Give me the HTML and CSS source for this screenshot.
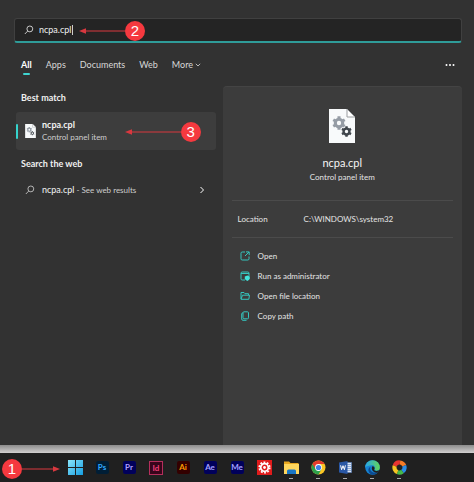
FILE: index.html
```
<!DOCTYPE html>
<html lang="en">
<head>
    <meta charset="utf-8">
    <title>Search</title>
    <link rel="stylesheet" href="styles.css">
</head>
<body>
    <!-- Shared shapes -->
    <svg class="defs" aria-hidden="true">
        <symbol id="search" viewBox="0 0 12 12">
            <circle cx="7" cy="4.7" r="3.5" fill="none" stroke="currentColor"/>
            <path d="M4.4 7.3 1 10.8" stroke="currentColor" fill="none"/>
        </symbol>
        <symbol id="gear" viewBox="-10 -10 20 20">
            <circle r="5.3" fill="none" stroke="currentColor" stroke-width="4.4"/>
            <path d="M0-6.5v-3M0 6.5v3M5.6-3.2l2.6-1.5M-5.6 3.2l-2.6 1.5M5.6 3.2l2.6 1.5M-5.6-3.2l-2.6-1.5" stroke="currentColor" stroke-width="4.4"/>
        </symbol>
        <symbol id="file" viewBox="0 0 26 34">
            <path d="M0 0h18l8 8v26H0z" fill="#f8fafb"/>
            <path d="M18 0v8h8z" fill="#fff" stroke="#9a9da0" stroke-width="1"/>
            <use href="#gear" x="3" y="7" width="14" height="14" color="#959ca5"/>
            <use href="#gear" x="12" y="17" width="11" height="11" color="#40464c"/>
        </symbol>
        <symbol id="arrow" viewBox="0 0 56 6" preserveAspectRatio="xMinYMid slice">
            <path d="M5 3h51" stroke="#d9383f" stroke-width="1"/>
            <path d="M0 3 7 .3v5.4z" fill="#d9383f"/>
        </symbol>
    </svg>

    <main class="panel">
        <div class="search-box">
            <svg class="icon"><use href="#search"/></svg>
            <input type="text" id="query" value="ncpa.cpl" aria-label="Search">
            <span class="caret"></span>
            <div class="callout callout-search"><svg><use href="#arrow"/></svg><span class="badge">2</span></div>
        </div>

        <nav class="tabs">
            <button class="tab active">All</button>
            <button class="tab">Apps</button>
            <button class="tab">Documents</button>
            <button class="tab">Web</button>
            <button class="tab">More
                <svg class="chevron" viewBox="0 0 6 6"><path d="M.8 1.8 3 4l2.2-2.2" fill="none" stroke="currentColor" stroke-width=".8"/></svg>
            </button>
            <button class="options" aria-label="Options">
                <svg viewBox="0 0 10 4"><circle cx="1.5" cy="2" r="1"/><circle cx="5" cy="2" r="1"/><circle cx="8.5" cy="2" r="1"/></svg>
            </button>
        </nav>

        <div class="content">
            <section class="results">
                <h2>Best match</h2>
                <button class="best">
                    <svg class="file-small"><use href="#file"/></svg>
                    <span class="best-text"><b>ncpa.cpl</b><span>Control panel item</span></span>
                    <span class="callout callout-best"><svg><use href="#arrow"/></svg><span class="badge">3</span></span>
                </button>
                <h2>Search the web</h2>
                <button class="web">
                    <svg class="icon"><use href="#search"/></svg>
                    <span class="web-text"><b>ncpa.cpl</b> - See web results</span>
                    <svg class="next" viewBox="0 0 6 8"><path d="M1.5 1 4.5 4l-3 3" fill="none" stroke="currentColor"/></svg>
                </button>
            </section>

            <section class="preview">
                <svg class="file-large"><use href="#file"/></svg>
                <h1>ncpa.cpl</h1>
                <p class="kind">Control panel item</p>
                <dl class="location">
                    <dt>Location</dt>
                    <dd>C:\WINDOWS\system32</dd>
                </dl>
                <div class="actions">
                    <button>
                        <svg viewBox="0 0 10 10"><path d="M5 1H2.2Q1 1 1 2.2v5.6Q1 9 2.2 9h5.6Q9 9 9 7.8V5.5M6 .9h3.2v3.2M9 1 5 5"/></svg>
                        Open
                    </button>
                    <button>
                        <svg viewBox="0 0 10 10"><path d="M5 9H2.2Q1 9 1 7.8V2.2Q1 1 2.2 1h5.6Q9 1 9 2.2V5M1 2.5h8"/><path class="solid" d="m7.3 4.500 2.500 1v1.800q0 1.800-2.500 2.700-2.500-.9-2.500-2.700V5.500z"/></svg>
                        Run as administrator
                    </button>
                    <button>
                        <svg viewBox="0 0 10 10"><path d="M1 8V1.500h3l1 1.200h3.500v1.500M1 8.300 2.500 4.200h7L8.800 8.300z"/></svg>
                        Open file location
                    </button>
                    <button>
                        <svg viewBox="0 0 10 10"><rect x="3" y=".8" width="5.500" height="7" rx="1"/><path d="M3 2H2.500Q1.700 2 1.700 3v5q0 1.300 1.300 1.300h3.500"/></svg>
                        Copy path
                    </button>
                </div>
            </section>
        </div>
    </main>

    <div class="desktop"></div>

    <footer class="taskbar">
        <div class="callout callout-start"><span class="badge">1</span><svg><use href="#arrow"/></svg></div>
        <button class="app" aria-label="Start">
            <svg class="windows" viewBox="0 0 15 15">
                <linearGradient id="win" x2="1" y2="1"><stop stop-color="#8ae6fb"/><stop offset="1" stop-color="#159de0"/></linearGradient>
                <path fill="url(#win)" d="M0 0h7v7H0zM8 0h7v7H8zM0 8h7v7H0zM8 8h7v7H8z"/>
            </svg>
        </button>
        <button class="app"><span class="tile ps">Ps</span></button>
        <button class="app"><span class="tile pr">Pr</span></button>
        <button class="app"><span class="tile id">Id</span></button>
        <button class="app"><span class="tile ai">Ai</span></button>
        <button class="app"><span class="tile ae">Ae</span></button>
        <button class="app"><span class="tile ae">Me</span></button>
        <button class="app" aria-label="Capture">
            <svg viewBox="0 0 15 15">
                <path fill="#e01b1b" d="M0 0h15v15H0z"/>
                <circle cx="7.5" cy="7.5" r="5.3" fill="none" stroke="#fff" stroke-width="1.6" stroke-dasharray="1.9 1.43"/>
                <circle cx="7.5" cy="7.5" r="3.8" fill="none" stroke="#fff" stroke-width="1.8"/>
                <circle cx="7.5" cy="7.5" r="1.4" fill="#fff"/>
            </svg>
        </button>
        <button class="app running" aria-label="File Explorer">
            <svg viewBox="0 0 15 15">
                <path fill="#e9a820" d="M0 1.500h5l1.500 1.500H14.500v4H0z"/>
                <path fill="#ffd75e" d="M0 4h15v10H0z"/>
                <path fill="#1976c5" d="M3 14v-3q0-1.500 1.500-1.500h6Q12 9.500 12 11v3z"/>
            </svg>
        </button>
        <button class="app running" aria-label="Chrome">
            <svg viewBox="0 0 15 15">
                <circle cx="7.5" cy="7.5" r="7" fill="#fbc624"/>
                <path fill="#2da14c" d="M1.440 4A7 7 0 0 0 7.500 14.500l3-5.200-3-1.800z"/>
                <path fill="#e33b2e" d="M7.500 4h6.060A7 7 0 0 0 1.440 4L4.500 9z"/>
                <circle cx="7.5" cy="7.5" r="3.4" fill="#fff"/>
                <circle cx="7.5" cy="7.5" r="2.6" fill="#3f7fe8"/>
            </svg>
        </button>
        <button class="app running" aria-label="Word">
            <svg viewBox="0 0 15 15">
                <path fill="#dfe8f5" stroke="#5580c0" stroke-width=".6" d="M8 2.500h5.500v10H8z"/>
                <path stroke="#6d91c8" stroke-width=".7" d="M9 4.500h4M9 6.500h4M9 8.500h4M9 10.500h4"/>
                <path fill="#2957a4" d="m1 2.500 8.500-1.500v13L1 12.500z"/>
                <path fill="none" stroke="#fff" d="m2.600 5.300 1 4.400 1.400-4 1.400 4 1-4.400"/>
            </svg>
        </button>
        <button class="app running" aria-label="Edge">
            <svg viewBox="0 0 15 15">
                <linearGradient id="edge" x2="1"><stop stop-color="#27a5e8"/><stop offset="1" stop-color="#63d657"/></linearGradient>
                <circle cx="7.5" cy="7.5" r="7.3" fill="#1683d3"/>
                <path fill="url(#edge)" d="M.2 7.500a7.300 7.300 0 0 1 14.600 0q0 3.200-3.300 3.200c-1.600 0-2.500-.6-2-1.400 1-2 0-4-2.500-4-3 0-5.500 1-6.800 2.200z"/>
                <path fill="#0b4b93" d="M5.500 6.700c-1.500 4 2 7.300 7.500 5.600-3 3.700-8.500 2.800-9.500-1.300-.5-2 .5-3.700 2-4.300z"/>
                <path fill="#202020" d="M7.400 6.300c1.800.2 2.700 1.500 2 3-.6 1 .4 1.600 2.200 1.600l3-.6-1.600 2.200c-4.400 1.100-7.600-3-5.600-6.200z"/>
            </svg>
        </button>
        <button class="app running" aria-label="Browser">
            <svg viewBox="0 0 15 15">
                <g fill="none" stroke-width="4.2">
                    <path stroke="#e73430" d="M2.700 6A5 5 0 0 1 8 2.500"/>
                    <path stroke="#f57a25" d="M8 2.500a5 5 0 0 1 4.200 3.300"/>
                    <path stroke="#2b8de6" d="M12.200 5.800a5 5 0 0 1-1.700 5.700"/>
                    <path stroke="#45b84a" d="M10.500 11.500a5 5 0 0 1-5 .6"/>
                    <path stroke="#f6c523" d="M5.500 12.100A5 5 0 0 1 2.700 6"/>
                </g>
            </svg>
        </button>
    </footer>
</body>
</html>
```
FILE: styles.css
```
* {
    box-sizing: border-box;
}

body {
    margin: 0;
    min-height: 100vh;
    display: flex;
    flex-direction: column;
    background: #202020;
    color: #e4e4e4;
    font-family: Lato, "Open Sans", sans-serif;
    font-size: 8px;
    line-height: 12px;
}

.defs {
    position: absolute;
    width: 0;
    height: 0;
}

button {
    display: flex;
    align-items: center;
    padding: 0;
    border: 0;
    background: none;
    color: inherit;
    font: inherit;
    text-align: left;
}

svg {
    display: block;
    flex: none;
}

.panel {
    flex: 1;
    display: flex;
    flex-direction: column;
    padding: 18px 12px 0 14px;
    background: #323232;
}

/* Search box */
.search-box {
    position: relative;
    display: flex;
    align-items: center;
    height: 25px;
    padding-left: 9px;
    border: 1px solid #404040;
    border-bottom: 2px solid #2f9c99;
    border-radius: 3px;
    background: #242424;
}

.icon {
    width: 10px;
    height: 10px;
}

.search-box input {
    width: 33px;
    margin-left: 5px;
    padding: 0;
    border: 0;
    outline: 0;
    background: none;
    color: #f0f0f0;
    font: inherit;
    font-size: 9px;
}

.caret {
    width: 1px;
    height: 10px;
    background: #ccc;
}

/* Numbered callouts */
.callout {
    position: absolute;
    display: flex;
    align-items: center;
}

.callout svg {
    width: 46px;
    height: 6px;
}

.badge {
    width: 20px;
    height: 20px;
    border-radius: 50%;
    background: #f5393f;
    color: #fff;
    font-family: "Liberation Sans", Arial, sans-serif;
    font-size: 15px;
    line-height: 20px;
    text-align: center;
}

.callout-search {
    left: 64px;
    top: 2px;
}

.callout-best {
    right: 15px;
    top: 10px;
}

.callout-best svg {
    width: 56px;
}

.callout-start {
    left: 2px;
    top: 6px;
}

.callout-start svg {
    width: 38px;
    transform: rotate(180deg);
}

/* Tabs */
.tabs {
    display: flex;
    gap: 14px;
    height: 43px;
    padding: 0 7px;
}

.tab {
    position: relative;
    color: #d8d8d8;
    font-size: 9px;
}

.tab.active {
    color: #fff;
    font-weight: 700;
}

.tab.active::after {
    content: "";
    position: absolute;
    left: 2px;
    bottom: 11px;
    width: 7px;
    height: 2px;
    border-radius: 1px;
    background: #3fd5d0;
}

.chevron {
    width: 6px;
    height: 6px;
    margin-left: 2px;
}

.options {
    margin-left: auto;
}

.options svg {
    width: 10px;
    height: 4px;
    fill: #fff;
}

/* Results */
.content {
    flex: 1;
    display: flex;
    gap: 7px;
}

.results {
    width: 45%;
    padding: 6px 0 0 2px;
}

h2 {
    margin: 0 5px;
    color: #f0f0f0;
    font-size: 9px;
    font-weight: 700;
    line-height: 12px;
}

.best {
    position: relative;
    width: 100%;
    height: 38px;
    margin: 8px 0;
    padding-left: 9px;
    border-radius: 3px;
    background: #3d3d3d;
}

.best::before {
    content: "";
    position: absolute;
    left: 0;
    top: 12px;
    width: 2px;
    height: 15px;
    border-radius: 1px;
    background: #35d3cc;
}

.file-small {
    width: 11px;
    height: 14px;
}

.best-text {
    display: flex;
    flex-direction: column;
    margin-left: 6px;
    color: #cdcdcd;
}

.best b,
.web b {
    color: #f4f4f4;
    font-size: 9px;
}

.web b {
    font-weight: 400;
}

.web {
    width: 100%;
    height: 40px;
    padding: 0 11px 0 9px;
    color: #cdcdcd;
}

.web-text {
    flex: 1;
    margin-left: 7px;
}

.next {
    width: 6px;
    height: 8px;
    color: #fff;
}

/* Preview */
.preview {
    flex: 1;
    padding: 22px 9px;
    border-radius: 4px 4px 0 0;
    border-top: 1px solid #444;
    background: #3c3c3c;
}

.file-large {
    width: 26px;
    height: 34px;
    margin: 0 auto;
}

h1 {
    margin: 12px 0 0;
    color: #f6f6f6;
    font-size: 11px;
    font-weight: 400;
    line-height: 16px;
    text-align: center;
}

.kind {
    margin: 0;
    text-align: center;
}

.location {
    display: flex;
    margin: 17px 0 8px;
    padding: 12px 6px;
    border-top: 1px solid #4b4b4b;
    border-bottom: 1px solid #4b4b4b;
}

.location dt {
    width: 66px;
}

.location dd {
    margin: 0;
}

.actions button {
    gap: 8px;
    width: 100%;
    height: 20px;
    padding-left: 8px;
}

.actions svg {
    width: 10px;
    height: 10px;
    fill: none;
    stroke: #35c5be;
    stroke-width: 1;
}

.actions .solid {
    fill: #43e5dd;
    stroke: none;
}

/* Desktop strip between panel and taskbar */
.desktop {
    height: 8px;
    background: linear-gradient(#8c8c8c, #d2d0d0);
}

/* Taskbar */
.taskbar {
    position: relative;
    display: flex;
    justify-content: center;
    height: 29px;
    background: #202020;
}

.app {
    position: relative;
    justify-content: center;
    width: 27px;
}

.app svg {
    width: 15px;
    height: 15px;
}

.running::after {
    content: "";
    position: absolute;
    bottom: 3px;
    width: 4px;
    height: 1px;
    background: #aaa;
}

.tile {
    width: 13px;
    height: 13px;
    border-radius: 2px;
    font-size: 8px;
    font-weight: 700;
    line-height: 13px;
    text-align: center;
}

.ps {
    background: #001e36;
    color: #31a8ff;
}

.pr {
    background: #00005b;
    color: #b0a0ff;
}

.id {
    width: 14px;
    height: 14px;
    border: 1px solid #b52e5c;
    border-radius: 0;
    background: #38051b;
    color: #f0407a;
    line-height: 12px;
}

.ai {
    background: #330000;
    color: #ff9a00;
}

.ae {
    background: #00005b;
    color: #a5a0ff;
}
```
